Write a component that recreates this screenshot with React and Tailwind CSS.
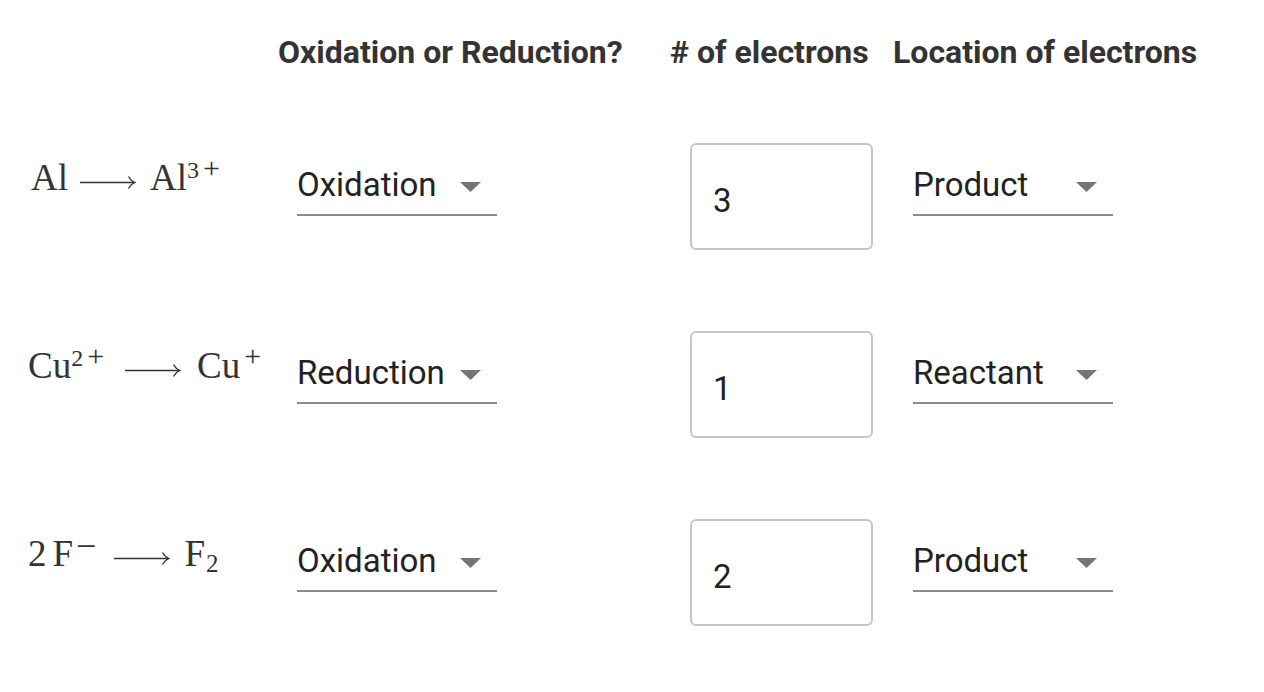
import React from 'react'

const ROWS = [
  { eq: 'al', redox: 'Oxidation', count: '3', where: 'Product' },
  { eq: 'cu', redox: 'Reduction', count: '1', where: 'Reactant' },
  { eq: 'f', redox: 'Oxidation', count: '2', where: 'Product' },
]

function Arrow({ className = '' }) {
  return (
    <svg width="56" height="16" viewBox="0 0 56 16" className={`inline-block ${className}`} aria-hidden="true">
      <path d="M0 8.5 H54" stroke="#333" strokeWidth="1.4" fill="none" />
      <path d="M48.5 2.5 Q51 7 55 8.5 Q51 10 48.5 14.5" stroke="#333" strokeWidth="1.3" fill="none" />
    </svg>
  )
}

// charge signs are drawn a little larger so their width matches the TeX glyphs
function Sup({ digit, sign, signClass = 'text-[30px]' }) {
  return (
    <span className="align-[12px] leading-[0]">
      {digit ? <span className="text-[24px] leading-[0]">{digit}</span> : null}
      <span className={`ml-[4px] leading-[0] ${signClass}`}>{sign}</span>
    </span>
  )
}

function Equation({ kind }) {
  const base = "whitespace-nowrap text-[37px] leading-[40px] text-[#333] font-['Liberation_Serif',serif]"
  if (kind === 'al') {
    return (
      <div className={base}>
        <span className="ml-[3px]">Al</span>
        <Arrow className="ml-[12px]" />
        <span className="ml-[14px]">Al</span>
        <Sup digit="3" sign="+" />
      </div>
    )
  }
  if (kind === 'cu') {
    return (
      <div className={base}>
        <span>Cu</span>
        <Sup digit="2" sign="+" />
        <Arrow className="ml-[21px]" />
        <span className="ml-[16px]">Cu</span>
        <Sup sign="+" />
      </div>
    )
  }
  return (
    <div className={base}>
      <span>2</span>
      <span className="ml-[6px]">F</span>
      <span className="ml-[3px] text-[36px] leading-[0] align-[8px]">−</span>
      <Arrow className="ml-[18px]" />
      <span className="ml-[14px]">F</span>
      <span className="ml-[1px] text-[25px] leading-[0] align-[-6px]">2</span>
    </div>
  )
}

function Select({ value }) {
  return (
    <div className="mt-[24px] flex h-[49px] w-[200px] items-start border-b-2 border-[#8c8c8c]">
      <div className="flex h-[36px] flex-1 items-center">
        <span className="flex-1 text-[33px] leading-[36px] text-[#222]">{value}</span>
        <svg width="21" height="10" viewBox="0 0 21 10" className="mr-[16px] mt-[4px]" aria-hidden="true">
          <path d="M0 0 H21 L10.5 10 Z" fill="#757575" />
        </svg>
      </div>
    </div>
  )
}

export default function App() {
  return (
    <div className="min-h-[692px] w-[1264px] bg-white font-['Roboto','Liberation_Sans',sans-serif]">
      <div className="flex pt-[34px] text-[32px] font-bold leading-[36px] text-[#333]">
        <div className="ml-[278px] w-[392px]">Oxidation or Reduction?</div>
        <div className="w-[223px]"># of electrons</div>
        <div>Location of electrons</div>
      </div>

      <div className="mt-[73px] flex flex-col gap-[81px]">
        {ROWS.map((r, i) => (
          <div key={i} className="flex h-[107px] items-start">
            <div className="mt-[15px] w-[297px] pl-[28px]">
              <Equation kind={r.eq} />
            </div>
            <Select value={r.redox} />
            <div className="ml-[193px] h-[107px] w-[183px] rounded-[6px] border-2 border-[#c6c6c6] pl-[21px] pt-[38px] text-[33px] leading-[36px] text-[#222]">
              {r.count}
            </div>
            <div className="ml-[40px]">
              <Select value={r.where} />
            </div>
          </div>
        ))}
      </div>
    </div>
  )
}
